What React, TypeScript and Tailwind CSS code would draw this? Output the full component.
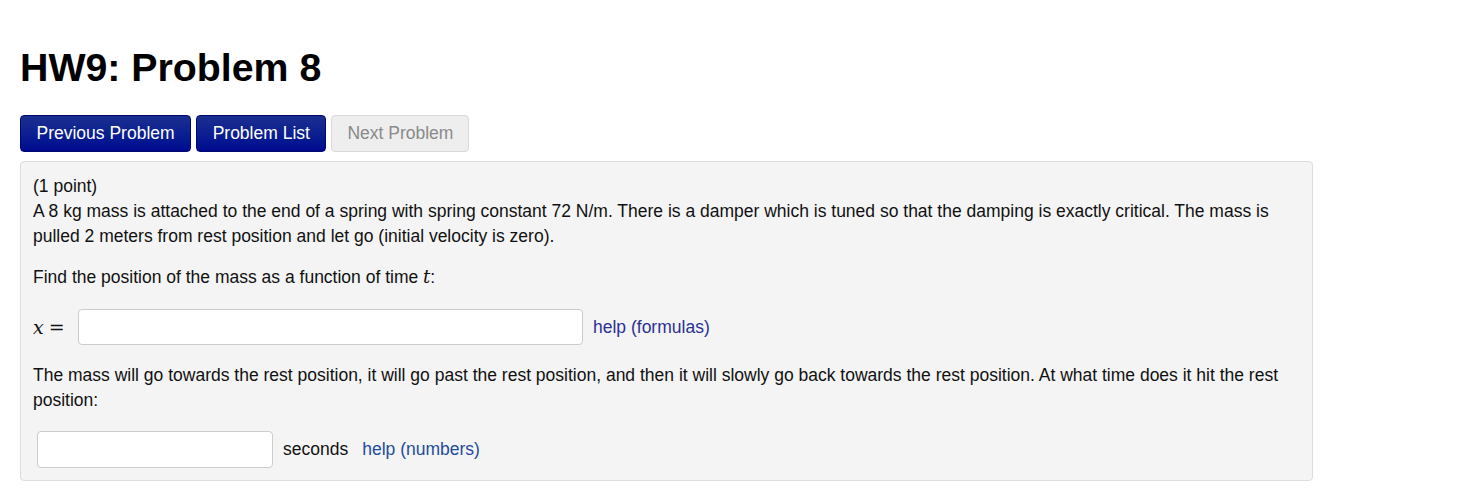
export default function App() {
    return (
        <div className="min-h-screen bg-white font-['Liberation_Sans',Arial,sans-serif] text-[#111]">
            <div className="pl-5 pr-[168px] pt-[46px]">
                <h1 className="text-[39.3px] leading-[43px] font-bold text-black">HW9: Problem 8</h1>

                <div className="mt-[26px] flex gap-[5px]">
                    <button className="h-[37px] rounded-[4px] border border-[#000a6e] bg-gradient-to-b from-[#1b2e90] to-[#000790] px-[15.5px] text-[17.5px] text-white">
                        Previous Problem
                    </button>
                    <button className="h-[37px] rounded-[4px] border border-[#000a6e] bg-gradient-to-b from-[#1b2e90] to-[#000790] px-[15.5px] text-[17.5px] text-white">
                        Problem List
                    </button>
                    <button className="h-[37px] rounded-[4px] border border-[#d9d9d9] bg-[#eeeeee] px-[15px] text-[17.5px] text-[#8a8a8a]">
                        Next Problem
                    </button>
                </div>

                <div className="mt-[9px] rounded-[4px] border border-[#dddddd] bg-[#f4f4f4] px-3 pt-3 pb-[12px] text-[17.5px] leading-[25px]">
                    <p>
                        (1 point)
                        <br />
                        A 8 kg mass is attached to the end of a spring with spring constant 72 N/m. There is a damper which is tuned so that the damping is exactly critical. The mass is pulled 2 meters from rest position and let go (initial velocity is zero).
                    </p>

                    <p className="mt-[15px]">
                        Find the position of the mass as a function of time{' '}
                        <span className="font-['DejaVu_Serif',serif] italic text-[18px]">t</span>:
                    </p>

                    <div className="mt-[19px] flex items-center">
                        <span className="flex w-[45px] items-center gap-[5px] font-['DejaVu_Serif',serif] text-[19px]">
                            <span className="italic">x</span>
                            <span>=</span>
                        </span>
                        <input className="h-9 w-[505px] rounded-[4px] border border-[#cccccc] bg-white" />
                        <a className="ml-[10px] text-[#2b3191]">help (formulas)</a>
                    </div>

                    <p className="mt-[18px]">
                        The mass will go towards the rest position, it will go past the rest position, and then it will slowly go back towards the rest position. At what time does it hit the rest position:
                    </p>

                    <div className="mt-[18px] flex items-center pl-1">
                        <input className="h-[37px] w-[236px] rounded-[4px] border border-[#cccccc] bg-white" />
                        <span className="ml-[10px]">seconds</span>
                        <a className="ml-[14px] text-[#1f4d9c]">help (numbers)</a>
                    </div>
                </div>
            </div>
        </div>
    );
}
